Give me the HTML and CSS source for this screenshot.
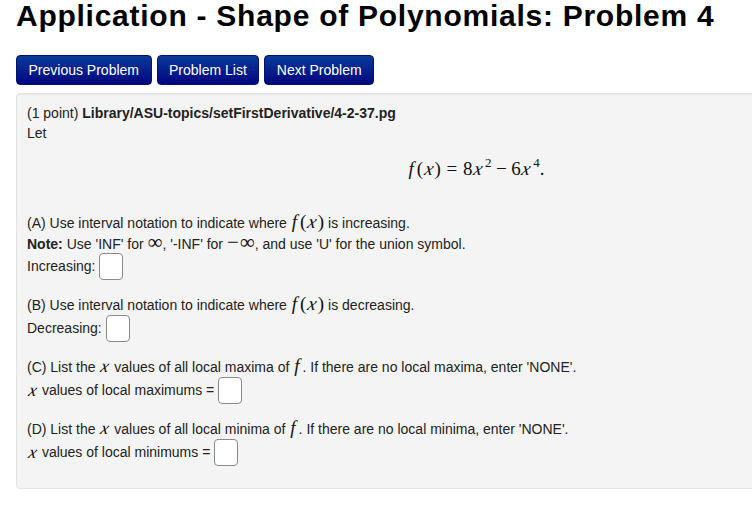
FILE: index.html
```html
<!DOCTYPE html>
<html>
<head>
<meta charset="utf-8">
<link rel="stylesheet" href="styles.css">
</head>
<body>
<div class="page">
  <h1 class="title">Application - Shape of Polynomials: Problem 4</h1>
  <div class="nav">
    <a class="btn">Previous Problem</a>
    <a class="btn">Problem List</a>
    <a class="btn">Next Problem</a>
  </div>
  <div class="well">
    <div class="line">(1 point) <b>Library/ASU-topics/setFirstDerivative/4-2-37.pg</b></div>
    <div class="line">Let</div>
    <div class="display"><span class="math"><i class="f">f</i>(<i class="x">x</i>)<span class="rel">=</span>8<i class="x">x</i><sup>2</sup><span class="bin">−</span>6<i class="x">x</i><sup>4</sup>.</span></div>
    <div class="line">(A) Use interval notation to indicate where <span class="math"><i class="f">f</i>(<i class="x">x</i>)</span> is increasing.</div>
    <div class="line"><b>Note:</b> Use 'INF' for <span class="math inf">∞</span>, '-INF' for <span class="math inf"><span class="neg">−</span>∞</span>, and use 'U' for the union symbol.</div>
    <div class="row">Increasing: <span class="box"></span></div>
    <div class="line">(B) Use interval notation to indicate where <span class="math"><i class="f">f</i>(<i class="x">x</i>)</span> is decreasing.</div>
    <div class="row">Decreasing: <span class="box"></span></div>
    <div class="line">(C) List the <span class="math sm"><i class="x">x</i></span> values of all local maxima of <span class="math"><i class="f">f</i></span>. If there are no local maxima, enter 'NONE'.</div>
    <div class="row"><span class="math sm"><i class="x">x</i></span> values of local maximums = <span class="box"></span></div>
    <div class="line">(D) List the <span class="math sm"><i class="x">x</i></span> values of all local minima of <span class="math"><i class="f">f</i></span>. If there are no local minima, enter 'NONE'.</div>
    <div class="row last"><span class="math sm"><i class="x">x</i></span> values of local minimums = <span class="box"></span></div>
  </div>
</div>
</body>
</html>
```

FILE: styles.css
```css
html, body {
  margin: 0;
  padding: 0;
  background: #fff;
  overflow: hidden;
}
body {
  font-family: "Liberation Sans", Arial, sans-serif;
  font-size: 14px;
  line-height: 20px;
  color: #222;
}
.page {
  padding-left: 16px;
}
.title {
  margin: 0;
  font-size: 30px;
  line-height: 32px;
  font-weight: bold;
  color: #000;
  letter-spacing: 0.74px;
  white-space: nowrap;
}
.nav {
  display: flex;
  gap: 5px;
  margin-top: 23px;
}
.btn {
  display: block;
  height: 30px;
  box-sizing: border-box;
  padding: 0 11.5px;
  line-height: 28px;
  border: 1px solid #00136e;
  border-radius: 4px;
  background: linear-gradient(to bottom, #0b3a98, #000680);
  color: #fff;
  font-size: 14px;
}
.well {
  margin-top: 8px;
  width: 920px;
  box-sizing: border-box;
  background: #f4f4f4;
  border: 1px solid #e3e3e3;
  border-radius: 4px;
  box-shadow: inset 0 1px 1px rgba(0,0,0,0.05);
  padding: 9px 10px 22px;
}
.line {
  height: 20px;
  white-space: nowrap;
}
.display {
  text-align: center;
  padding: 13px 0 15px;
  height: 26px;
  line-height: 26px;
  margin-bottom: 15px;
}
.math {
  font-family: "Liberation Serif", "DejaVu Serif", serif;
  font-size: 19px;
  color: #111;
}
.math i.f {
  margin: 0 3px 0 1px;
}
.math i.x {
  display: inline-block;
  margin: 0 1.5px;
  transform: skewX(-12deg);
}
.math.sm {
  font-size: 18px;
}
.math.inf {
  font-size: 21px;
}
.neg {
  margin-right: 1px;
}
.math sup {
  font-size: 13px;
  line-height: 0;
  vertical-align: 8px;
  margin-left: 1px;
}
.rel {
  margin: 0 0.3em;
}
.bin {
  margin: 0 0.24em;
}
.row {
  height: 28px;
  display: flex;
  align-items: center;
  white-space: pre;
  margin-bottom: 14px;
}
.row.last {
  margin-bottom: 0;
}
.box {
  display: inline-block;
  width: 24px;
  height: 27px;
  box-sizing: border-box;
  border: 1px solid #8a8a8a;
  border-radius: 4px;
  background: #fff;
}
```
